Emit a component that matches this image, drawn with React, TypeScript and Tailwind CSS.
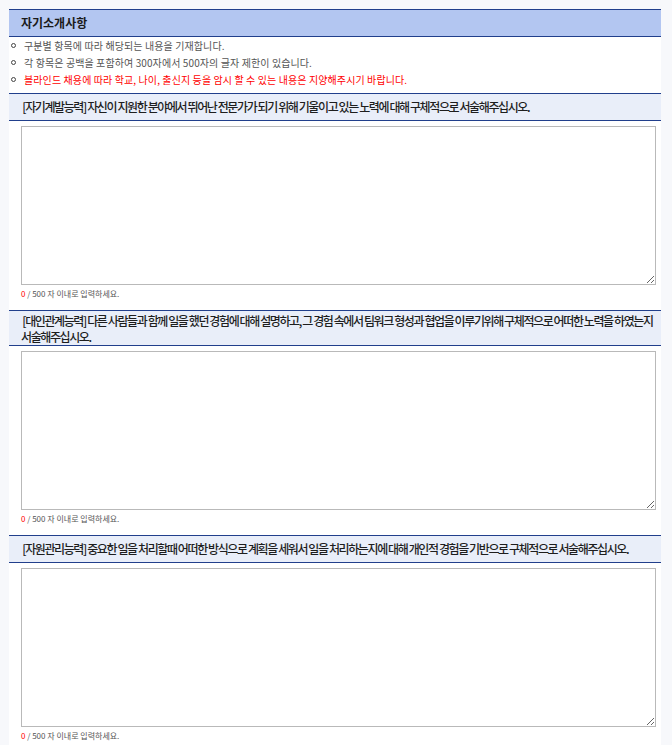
import React from "react";

const questions: { title: React.ReactNode; two?: boolean }[] = [
  {
    title:
      "\u00a0[자기계발능력] 자신이 지원한 분야에서 뛰어난 전문가가 되기 위해 기울이고 있는 노력에 대해 구체적으로 서술해주십시오.",
  },
  {
    title: (
      <>
        {"\u00a0[대인관계능력] 다른 사람들과 함께 일을 했던 경험에 대해 설명하고, 그 경험 속에서 팀워크 형성과 협업을 이루기위해 구체적으로 어떠한 노력을 하였는지"}
        <br />
        서술해주십시오.
      </>
    ),
    two: true,
  },
  {
    title:
      "\u00a0[자원관리능력] 중요한 일을 처리할때 어떠한 방식으로 계획을 세워서 일을 처리하는지에 대해 개인적 경험을 기반으로 구체적으로 서술해주십시오.",
  },
];

const bullets = [
  { text: "구분별 항목에 따라 해당되는 내용을 기재합니다.", red: false },
  { text: "각 항목은 공백을 포함하여 300자에서 500자의 글자 제한이 있습니다.", red: false },
  {
    text: "블라인드 채용에 따라 학교, 나이, 출신지 등을 암시 할 수 있는 내용은 지양해주시기 바랍니다.",
    red: true,
  },
];

export default function App() {
  return (
    <div
      className="min-h-[745px] w-full bg-[#f7f8fb] pt-[9px]"
      style={{ fontFamily: '"Noto Sans CJK KR", "Noto Sans", sans-serif' }}
    >
      <div className="ml-[9px] w-[652px] bg-white">
        <div className="flex h-[28px] items-center border-y border-[#213f8c] bg-[#b3c6f1] pl-[12px]">
          <span className="text-[12px] font-bold leading-none tracking-[0px] text-[#1a1a1a]">
            자기소개사항
          </span>
        </div>
        <ul className="pb-[5px]">
          {bullets.map((b, i) => (
            <li key={i} className="flex h-[17px] items-center">
              <span className="ml-[2px] mr-[8px] h-[5px] w-[5px] rounded-full border border-[#444]" />
              <span
                className={
                  b.red
                    ? "text-[10px] leading-none tracking-[0.1px] text-[#ff0000]"
                    : "text-[10px] leading-none tracking-[0.1px] text-[#555555]"
                }
              >
                {b.text}
              </span>
            </li>
          ))}
        </ul>
        {questions.map((q, i) => (
          <div key={i} className="pb-[11px]">
            <div
              className={
                q.two
                  ? "border-y border-[#213f8c] bg-[#e9eef9] pl-[12px] pr-[2px] pt-[2px]"
                  : "flex h-[28px] items-center border-y border-[#213f8c] bg-[#e9eef9] pl-[12px] pr-[2px]"
              }
            >
              <p className="whitespace-nowrap text-[12px] font-medium leading-[16px] tracking-[-1.4px] text-[#1e1e1e]">
                {q.title}
              </p>
            </div>
            <div className="pl-[12px] pr-[5px] pt-[5px]">
              <textarea className="block h-[159px] w-[635px] border border-[#b9b9b9] bg-white outline-none" />
              <div className="mt-[4px] h-[10px] text-[8px] leading-[10px] tracking-[0px] text-[#555555]">
                <span className="text-[#ff0000]">0</span> / 500 자 이내로 입력하세요.
              </div>
            </div>
          </div>
        ))}
      </div>
    </div>
  );
}
